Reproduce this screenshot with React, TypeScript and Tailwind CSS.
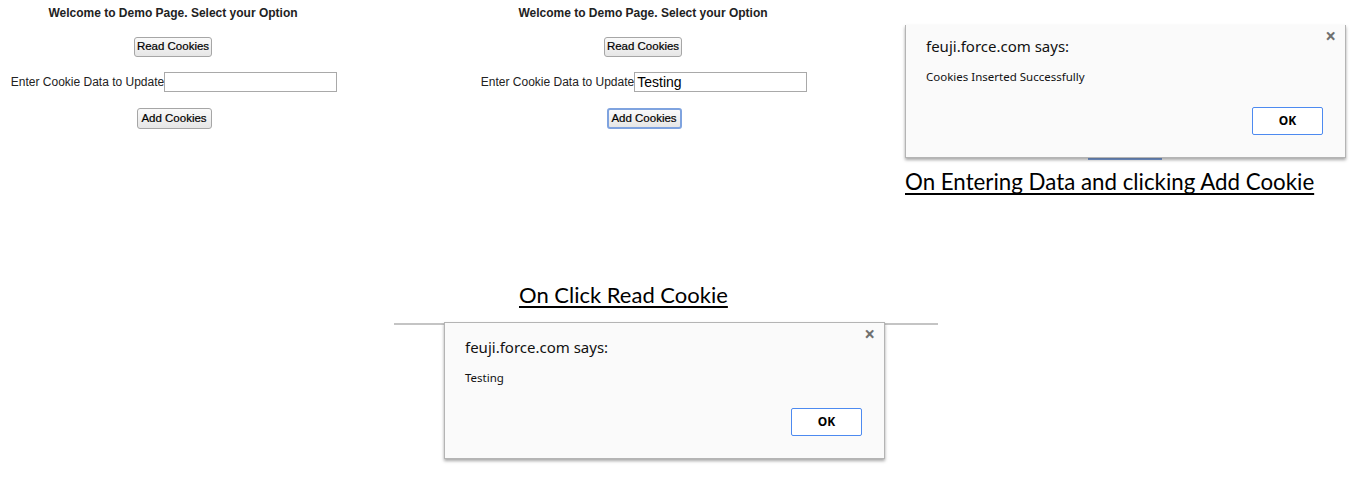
import React from 'react';

const PAGE_FONT = 'font-["Liberation_Sans",Arial,sans-serif]';

function DemoPanel({ value, focused }: { value: string; focused?: boolean }) {
    return (
        <div className={`w-[346px] pt-[6px] flex flex-col items-center text-[#222] ${PAGE_FONT}`}>
            <div className="text-[12px] leading-[14px] font-bold">Welcome to Demo Page. Select your Option</div>
            <button className="mt-[17px] w-[78px] h-[20px] rounded-[3px] border border-[#a6a6a6] bg-gradient-to-b from-[#fafafa] to-[#e6e6e6] text-[11.5px] leading-none text-black [-webkit-text-stroke:0.2px_black]">
                Read Cookies
            </button>
            <div className="mt-[15px] flex items-center h-[20px] pl-[2px]">
                <span className="text-[12px] leading-[14px] text-[#222]">Enter Cookie Data to Update</span>
                <div className="w-[173px] h-[20px] border border-[#a9a9a9] bg-white px-[2px] text-[14px] leading-[18px] text-black">
                    {value}
                </div>
            </div>
            <button
                className={
                    focused
                        ? 'mt-[16px] ml-[2px] w-[75px] h-[21px] rounded-[3px] border-2 border-[#7fa3df] bg-gradient-to-b from-[#fafafa] to-[#e6e6e6] text-[11.5px] leading-none text-black [-webkit-text-stroke:0.2px_black]'
                        : 'mt-[16px] ml-[2px] w-[75px] h-[21px] rounded-[3px] border border-[#a6a6a6] bg-gradient-to-b from-[#fafafa] to-[#e6e6e6] text-[11.5px] leading-none text-black [-webkit-text-stroke:0.2px_black]'
                }
            >
                Add Cookies
            </button>
        </div>
    );
}

function AlertBox({ message, className }: { message: string; className: string }) {
    return (
        <div className={`relative w-[441px] bg-[#fafafa] border border-[#b4b4b4] shadow-[0_2px_3px_rgba(0,0,0,0.35)] pl-[20px] pr-[22px] pb-[22px] font-["Noto_Sans","Open_Sans",sans-serif] text-[#111] ${className}`}>
            <span className="absolute right-[9px] top-[1px] text-[19px] leading-[20px] font-bold text-[#707070]">×</span>
            <div className="text-[15px] leading-[20px]">feuji.force.com says:</div>
            <div className="mt-[13px] text-[11.5px] leading-[16px]">{message}</div>
            <div className="mt-[22px] flex justify-end">
                <button className="w-[71px] h-[28px] rounded-[2px] border border-[#4d8af0] bg-white text-[12px] font-bold text-black">
                    OK
                </button>
            </div>
        </div>
    );
}

const CAPTION = "text-[22.3px] leading-[26px] underline underline-offset-[3px] decoration-[2px] [text-decoration-skip-ink:none] text-black font-['Lato',sans-serif]";

export default function App() {
    return (
        <div className="w-[1364px] h-[478px] bg-white overflow-hidden">
            <div className="flex">
                <DemoPanel value="" />
                <div className="ml-[124px]">
                    <DemoPanel value="Testing" focused />
                </div>
                <div className="ml-[89px] pt-[25px] flex flex-col">
                    <AlertBox message="Cookies Inserted Successfully" className="border-t-0 pt-[11px]" />
                    <div className="ml-[183px] w-[74px] h-[2px] bg-[#7fa3df]" />
                    <div className={`mt-[9px] ${CAPTION}`}>
                        On Entering Data and clicking Add Cookie
                    </div>
                </div>
            </div>
            <div className="mt-[87px] pl-[519px]">
                <span className={`${CAPTION} text-[22px]`}>On Click Read Cookie</span>
            </div>
            <div className="mt-[14px] ml-[394px] w-[544px] border-t-2 border-[#c4c4c4]">
                <div className="ml-[50px] -mt-[3px]">
                    <AlertBox message="Testing" className="pt-[14px]" />
                </div>
            </div>
        </div>
    );
}
